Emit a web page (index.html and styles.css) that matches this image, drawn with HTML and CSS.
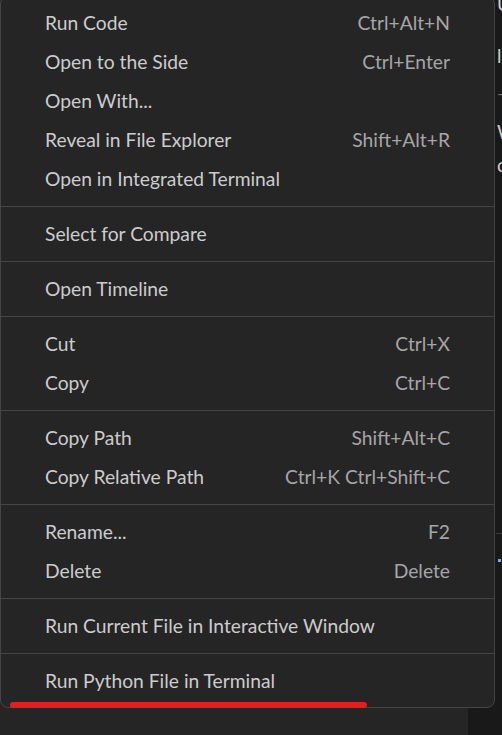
FILE: index.html
```html
<!DOCTYPE html>
<html lang="en">
<head>
<meta charset="utf-8">
<title>Context menu</title>
<link rel="stylesheet" href="styles.css">
</head>
<body>
<div class="page">
  <div class="panel"></div>
  <div class="editor">
    <div class="eline l1">U</div>
    <div class="eline l2">l</div>
    <div class="eline l3 dim">—</div>
    <div class="eline l4">W</div>
    <div class="eline l5">c</div>
    <div class="hrule"></div>
    <div class="dot"></div>
  </div>

  <div class="menu">
    <div class="item"><span class="label">Run Code</span><span class="key">Ctrl+Alt+N</span></div>
    <div class="item"><span class="label">Open to the Side</span><span class="key">Ctrl+Enter</span></div>
    <div class="item"><span class="label">Open With...</span></div>
    <div class="item"><span class="label">Reveal in File Explorer</span><span class="key">Shift+Alt+R</span></div>
    <div class="item"><span class="label">Open in Integrated Terminal</span></div>
    <div class="sep"></div>
    <div class="item"><span class="label">Select for Compare</span></div>
    <div class="sep"></div>
    <div class="item"><span class="label">Open Timeline</span></div>
    <div class="sep"></div>
    <div class="item"><span class="label">Cut</span><span class="key">Ctrl+X</span></div>
    <div class="item"><span class="label">Copy</span><span class="key">Ctrl+C</span></div>
    <div class="sep"></div>
    <div class="item"><span class="label">Copy Path</span><span class="key">Shift+Alt+C</span></div>
    <div class="item"><span class="label">Copy Relative Path</span><span class="key">Ctrl+K Ctrl+Shift+C</span></div>
    <div class="sep"></div>
    <div class="item"><span class="label">Rename...</span><span class="key">F2</span></div>
    <div class="item"><span class="label">Delete</span><span class="key">Delete</span></div>
    <div class="sep"></div>
    <div class="item"><span class="label">Run Current File in Interactive Window</span></div>
    <div class="sep"></div>
    <div class="item"><span class="label">Run Python File in Terminal</span></div>
  </div>
  <div class="underline"></div>
</div>
</body>
</html>
```

FILE: styles.css
```css
html, body {
  margin: 0;
  padding: 0;
}
body {
  background: #181818;
  font-family: "Lato", "Noto Sans", sans-serif;
  overflow: hidden;
}
.page {
  position: relative;
  width: 502px;
  height: 735px;
  display: flex;
  overflow: hidden;
}
.panel {
  width: 468px;
  background: #252526;
}
.editor {
  position: relative;
  flex: 1;
  background: #191919;
  overflow: hidden;
}
.eline {
  position: absolute;
  left: 29px;
  color: #cccccc;
  font-size: 19px;
  line-height: 20px;
}
.eline.dim { color: #6a6a6a; }
.l1 { top: -6px; }
.l2 { top: 46px; }
.l3 { top: 83px; }
.l4 { top: 122px; }
.l5 { top: 155px; }
.hrule {
  position: absolute;
  left: 28px;
  right: 0;
  top: 533px;
  height: 1px;
  background: #3a3a3a;
}
.dot {
  position: absolute;
  left: 30px;
  top: 559px;
  width: 3px;
  height: 3px;
  background: #7aa7ff;
}
.menu {
  position: absolute;
  left: 0;
  top: -4px;
  width: 493px;
  background: #252526;
  border: 1px solid #454545;
  border-radius: 8px;
  padding: 6px 0 7px;
  color: #cccccc;
}
.item {
  height: 39px;
  display: flex;
  align-items: center;
  justify-content: space-between;
  padding: 0 44px 0 44px;
  font-size: 19.25px;
  white-space: nowrap;
}
.key {
  color: #a6a6a6;
}
.sep {
  height: 16px;
  display: flex;
  flex-direction: column;
}
.sep::before {
  content: "";
  margin-top: 8px;
  height: 1px;
  background: #454545;
}
.underline {
  position: absolute;
  left: 10px;
  top: 702px;
  width: 357px;
  height: 6px;
  border-radius: 3px;
  background: #e41d1d;
}
```
